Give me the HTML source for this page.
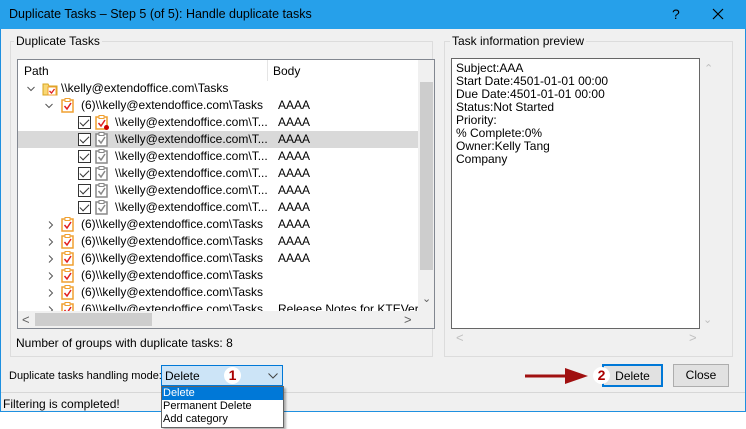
<!DOCTYPE html>
<html><head><meta charset="utf-8"><style>
*{margin:0;padding:0;box-sizing:border-box}
body{width:746px;height:429px;background:#fff;font-family:"Liberation Sans",Arial,sans-serif;font-size:12px;color:#000;position:relative;overflow:hidden}
.abs{position:absolute}
.win{left:0;top:0;width:746px;height:412px;background:#f0f0f0;border:1px solid #1e90e0}
.title{left:0;top:0;width:746px;height:29px;background:#26a0ea}
.title span{position:absolute;left:9px;top:7px;font-size:12.5px}
.grp{border:1px solid #dcdcdc}
.lbl{background:#f0f0f0;padding:0 2px;white-space:nowrap}
.row{position:absolute;left:0;height:17px;white-space:nowrap;line-height:17px}
.chk{position:absolute;width:13px;height:13px;border:1px solid #333;background:#fff}
.chk:after{content:"";position:absolute;left:3px;top:0px;width:4px;height:8px;border:solid #333;border-width:0 1.5px 1.5px 0;transform:rotate(45deg)}
.sb{background:#f0f0f0}
.arrow{color:#606060;font-size:11px}
.btn{border:1px solid #adadad;background:#e1e1e1;text-align:center;line-height:20px}
</style></head><body>
<div class="abs win"></div>
<div class="abs title"><span>Duplicate Tasks – Step 5 (of 5): Handle duplicate tasks</span></div>
<div class="abs" style="left:672px;top:6px;font-size:14px">?</div>
<svg class="abs" style="left:712px;top:8px" width="12" height="12"><path d="M1 1L11 11M11 1L1 11" stroke="#000" stroke-width="1.2"/></svg>

<div class="abs grp" style="left:10px;top:41px;width:423px;height:316px"></div>
<div class="abs lbl" style="left:14px;top:34px">Duplicate Tasks</div>
<div class="abs" style="left:17px;top:59px;width:418px;height:270px;border:1px solid #828790;background:#fff;overflow:hidden">
 <div class="abs" style="left:6px;top:4px">Path</div>
 <div class="abs" style="left:249px;top:0;width:1px;height:21px;background:#e5e5e5"></div>
 <div class="abs" style="left:255px;top:4px">Body</div>
 <div class="abs" style="left:0;top:71px;width:400px;height:17px;background:#d9d9d9"></div>
 <div id="rows"></div>
 <div class="abs sb" style="left:400px;top:0;width:17px;height:251px"></div>
 <div class="abs" style="left:402px;top:22px;width:13px;height:188px;background:#cdcdcd"></div>
 <div class="abs arrow" style="left:404px;top:232px">⌄</div>
 <div class="abs sb" style="left:0;top:251px;width:417px;height:17px"></div>
 <div class="abs" style="left:17px;top:253px;width:117px;height:13px;background:#cdcdcd"></div>
 <div class="abs arrow" style="left:4px;top:252px;font-size:13px">&lt;</div>
 <div class="abs arrow" style="left:386px;top:252px;font-size:13px">&gt;</div>
</div>
<div class="abs" style="left:16px;top:336px">Number of groups with duplicate tasks: 8</div>

<div class="abs grp" style="left:444px;top:41px;width:289px;height:316px"></div>
<div class="abs lbl" style="left:450px;top:34px">Task information preview</div>
<div class="abs" style="left:451px;top:58px;width:249px;height:271px;border:1px solid #666;background:#fff;padding:3px 4px;line-height:13px">Subject:AAA<br>Start Date:4501-01-01 00:00<br>Due Date:4501-01-01 00:00<br>Status:Not Started<br>Priority:<br>% Complete:0%<br>Owner:Kelly Tang<br>Company</div>
<div class="abs" style="left:704px;top:62px;color:#c0c0c0;font-size:11px">⌃</div>
<div class="abs" style="left:703px;top:313px;color:#c0c0c0;font-size:11px">⌄</div>
<div class="abs" style="left:456px;top:330px;color:#c0c0c0;font-size:13px">&lt;</div>
<div class="abs" style="left:689px;top:330px;color:#c0c0c0;font-size:13px">&gt;</div>

<div class="abs" style="left:1px;top:392px;width:744px;height:1px;background:#d7d7d7"></div>
<div class="abs" style="left:3px;top:397px">Filtering is completed!</div>

<div class="abs" style="left:9px;top:370px;font-size:11px;white-space:nowrap">Duplicate tasks handling mode:</div>
<div class="abs" style="left:161px;top:365px;width:122px;height:21px;border:1px solid #0078d7;background:#cce4f7"><span class="abs" style="left:3px;top:3px">Delete</span>
<svg class="abs" style="left:106px;top:7px" width="10" height="6"><path d="M0.5 0.5L5 5L9.5 0.5" stroke="#444" fill="none"/></svg></div>
<div class="abs" style="left:224px;top:367px;width:17px;height:17px;border-radius:50%;background:#fff;color:#a00;font-weight:bold;font-size:14px;text-align:center;line-height:17px">1</div>
<div class="abs" style="left:161px;top:386px;width:123px;height:42px;border:1px solid #646464;background:#fff;box-shadow:2px 2px 2px rgba(0,0,0,.3);font-size:11px;z-index:10">
 <div style="background:#0078d7;color:#fff;height:13px;line-height:13px;padding-left:1px">Delete</div>
 <div style="height:13px;line-height:13px;padding-left:1px">Permanent Delete</div>
 <div style="height:13px;line-height:13px;padding-left:1px">Add category</div>
</div>

<svg class="abs" style="left:525px;top:365px" width="70" height="22"><path d="M0 11H45" stroke="#a01010" stroke-width="3"/><path d="M40 3L63 11L40 19Z" fill="#a01010"/></svg>
<div class="abs btn" style="left:602px;top:364px;width:61px;height:23px;border:2px solid #0078d7">Delete</div>
<div class="abs" style="left:593px;top:367px;width:17px;height:17px;border-radius:50%;background:#fff;color:#a00;font-weight:bold;font-size:14px;text-align:center;line-height:17px">2</div>
<div class="abs btn" style="left:673px;top:364px;width:56px;height:23px">Close</div>

<script>
var r=document.getElementById('rows'),h='';
function clip(x,t,c){return '<svg class="abs" style="left:'+x+'px;top:'+(t+1)+'px" width="13" height="15"><rect x="1" y="2" width="11" height="12" fill="#fff" stroke="'+(c?'#f0a030':'#888')+'" stroke-width="1.5"/><rect x="4" y="0.5" width="5" height="3" fill="#fff" stroke="'+(c?'#f0a030':'#888')+'"/><path d="M3.5 8L6 11L10 5" stroke="'+(c?'#e02020':'#888')+'" stroke-width="1.5" fill="none"/></svg>';}
function exp(x,t,o){return '<svg class="abs" style="left:'+x+'px;top:'+(t+5)+'px" width="8" height="8"><path d="'+(o?'M0.5 2L4 5.5L7.5 2':'M2 0.5L5.5 4L2 7.5')+'" stroke="#555" fill="none"/></svg>';}
function txt(x,t,s){return '<div class="row" style="left:'+x+'px;top:'+t+'px">'+s+'</div>';}
var t=20;
h+=exp(9,t,1)+'<svg class="abs" style="left:24px;top:'+(t+1)+'px" width="16" height="15"><path d="M1 3H6L7 5H15V14H1Z" fill="#f8d775" stroke="#d9a520"/><rect x="6" y="6" width="8" height="8" fill="#fff" stroke="#f0a030"/><path d="M7.5 10L9.5 12L12.5 8" stroke="#e02020" fill="none" stroke-width="1.3"/></svg>'+txt(43,t,'\\\\kelly@extendoffice.com\\Tasks');
t+=17;h+=exp(27,t,1)+clip(43,t,1)+txt(63,t,'(6)\\\\kelly@extendoffice.com\\Tasks')+txt(260,t,'AAAA');
for(var i=0;i<6;i++){t+=17;h+='<div class="chk" style="left:60px;top:'+(t+2)+'px"></div>'+clip(77,t,i==0)+(i==0?'<div class="abs" style="left:86px;top:'+(t+11)+'px;width:5px;height:5px;border-radius:50%;background:#c00"></div>':'')+txt(97,t,'\\\\kelly@extendoffice.com\\T...')+txt(260,t,'AAAA');}
var b=['AAAA','AAAA','AAAA','','','Release Notes for KTEVersion'];
for(var i=0;i<6;i++){t+=17;h+=exp(29,t,0)+clip(43,t,1)+txt(63,t,'(6)\\\\kelly@extendoffice.com\\Tasks')+txt(260,t,b[i]);}
r.innerHTML=h;
</script>
</body></html>
